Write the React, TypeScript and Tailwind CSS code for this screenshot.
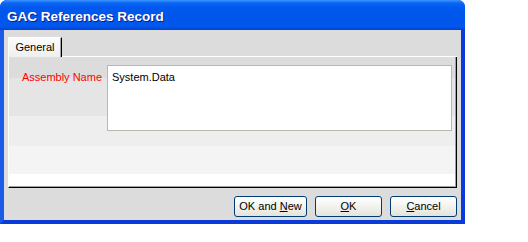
export default function App() {
  return (
    <div className="w-[528px] h-[242px] bg-white" style={{ fontFamily: '"Liberation Sans", Arial, sans-serif' }}>
      <div className="w-[465px] h-[224px] flex flex-col rounded-t-[7px] overflow-hidden bg-[#0831d9]">
        {/* title bar */}
        <div className="h-[30px] shrink-0 flex items-center pl-[7px] pt-[4px] bg-[linear-gradient(to_bottom,#3d95ff_0px,#0a66f2_3px,#0058ee_8px,#0055ea_20px,#0058ee_26px,#0043cf_30px)]">
          <span className="text-white font-bold text-[13.5px] [text-shadow:1px_1px_0_#0a1e8c]">
            GAC References Record
          </span>
        </div>

        {/* window body */}
        <div className="flex-1 flex flex-col border-l-4 border-r-4 border-b-4 border-l-[#1a5ce8] border-r-[#0a3ad8] border-b-[#0a3ad8] bg-[#dcdcdc]">
          <div className="pt-[7px] pl-[4px] pr-[4px] flex flex-col">
            {/* tab strip */}
            <div className="flex">
              <div className="h-[20px] w-[54px] flex items-center justify-center border-l border-t border-white border-r border-r-black shadow-[inset_-1px_0_0_#a0a0a0] bg-[linear-gradient(to_bottom,#fbfbfb,#efefef)] text-[11px] text-black">
                General
              </div>
              <div className="flex-1 self-end border-b border-white"></div>
            </div>

            {/* tab panel */}
            <div className="h-[131px] border-l border-white border-r border-b border-r-black border-b-black shadow-[inset_-1px_-1px_0_#a0a0a0] bg-[linear-gradient(to_bottom,#dcdcdc_0px,#dcdcdc_21px,#e5e5e5_21px,#e5e5e5_59px,#eeeeee_59px,#eeeeee_89px,#f4f4f4_89px,#f4f4f4_117px,#ffffff_117px)]">
              <div className="flex pt-[8px] pr-[4px]">
                <div className="w-[93px] text-right text-[11px] text-[#ff0000] pt-[4px]">Assembly Name</div>
                <div className="ml-[5px] flex-1 h-[66px] border border-[#bab9a6] bg-white px-[4px] pt-[3px] text-[11px] text-black">
                  System.Data
                </div>
              </div>
            </div>
          </div>

          {/* footer buttons */}
          <div className="flex justify-end gap-[8px] pt-[8px] pr-[4px]">
            <button className="w-[73px] h-[21px] rounded-[3px] border border-[#003c74] bg-[linear-gradient(to_bottom,#ffffff,#f0f0ea_60%,#e3e3db)] text-[11px] text-black">
              OK and <span className="underline">N</span>ew
            </button>
            <button className="w-[67px] h-[21px] rounded-[3px] border border-[#003c74] bg-[linear-gradient(to_bottom,#ffffff,#f0f0ea_60%,#e3e3db)] text-[11px] text-black">
              <span className="underline">O</span>K
            </button>
            <button className="w-[67px] h-[21px] rounded-[3px] border border-[#003c74] bg-[linear-gradient(to_bottom,#ffffff,#f0f0ea_60%,#e3e3db)] text-[11px] text-black">
              <span className="underline">C</span>ancel
            </button>
          </div>
        </div>
      </div>
    </div>
  );
}
